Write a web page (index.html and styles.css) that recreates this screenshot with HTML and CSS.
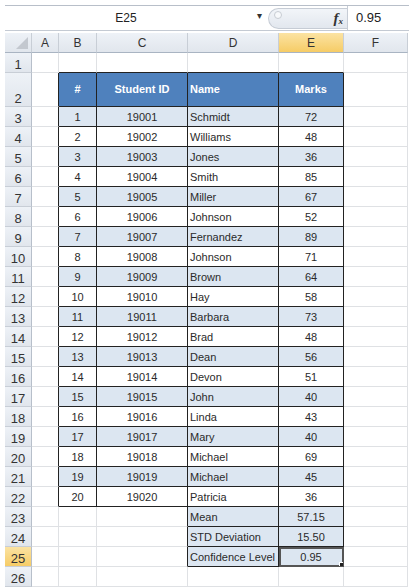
FILE: index.html
```html
<!DOCTYPE html>
<html lang="en">
<head>
  <meta charset="UTF-8">
  <title>Student Marks</title>
  <link rel="stylesheet" href="styles.css">
</head>
<body>
  <div class="window">
    <div class="formula-bar">
      <div class="name-box">E25<span class="drop">&#9662;</span></div>
      <div class="fx-pill"><span class="knob"></span><span class="fx">f<sub>x</sub></span></div>
      <div class="formula">0.95</div>
    </div>

    <table class="sheet">
      <colgroup>
        <col style="width:27px"><col style="width:27px"><col style="width:38px"><col style="width:91px">
        <col style="width:91px"><col style="width:65px"><col style="width:64px">
      </colgroup>
      <tr class="col-heads">
        <th class="corner"><span class="tri"></span></th>
        <th>A</th><th>B</th><th>C</th><th>D</th><th class="sel">E</th><th>F</th>
      </tr>
      <tr><th>1</th><td></td><td class="above"></td><td class="above"></td><td class="above"></td><td class="above"></td><td></td></tr>
      <tr class="tall">
        <th>2</th><td class="before"></td>
        <td class="d hd c">#</td><td class="d hd c">Student ID</td><td class="d hd">Name</td><td class="d hd c">Marks</td><td></td>
      </tr>
      <tr class="odd"><th>3</th><td class="before"></td><td class="d c">1</td><td class="d c">19001</td><td class="d">Schmidt</td><td class="d c">72</td><td></td></tr>
      <tr><th>4</th><td class="before"></td><td class="d c">2</td><td class="d c">19002</td><td class="d">Williams</td><td class="d c">48</td><td></td></tr>
      <tr class="odd"><th>5</th><td class="before"></td><td class="d c">3</td><td class="d c">19003</td><td class="d">Jones</td><td class="d c">36</td><td></td></tr>
      <tr><th>6</th><td class="before"></td><td class="d c">4</td><td class="d c">19004</td><td class="d">Smith</td><td class="d c">85</td><td></td></tr>
      <tr class="odd"><th>7</th><td class="before"></td><td class="d c">5</td><td class="d c">19005</td><td class="d">Miller</td><td class="d c">67</td><td></td></tr>
      <tr><th>8</th><td class="before"></td><td class="d c">6</td><td class="d c">19006</td><td class="d">Johnson</td><td class="d c">52</td><td></td></tr>
      <tr class="odd"><th>9</th><td class="before"></td><td class="d c">7</td><td class="d c">19007</td><td class="d">Fernandez</td><td class="d c">89</td><td></td></tr>
      <tr><th>10</th><td class="before"></td><td class="d c">8</td><td class="d c">19008</td><td class="d">Johnson</td><td class="d c">71</td><td></td></tr>
      <tr class="odd"><th>11</th><td class="before"></td><td class="d c">9</td><td class="d c">19009</td><td class="d">Brown</td><td class="d c">64</td><td></td></tr>
      <tr><th>12</th><td class="before"></td><td class="d c">10</td><td class="d c">19010</td><td class="d">Hay</td><td class="d c">58</td><td></td></tr>
      <tr class="odd"><th>13</th><td class="before"></td><td class="d c">11</td><td class="d c">19011</td><td class="d">Barbara</td><td class="d c">73</td><td></td></tr>
      <tr><th>14</th><td class="before"></td><td class="d c">12</td><td class="d c">19012</td><td class="d">Brad</td><td class="d c">48</td><td></td></tr>
      <tr class="odd"><th>15</th><td class="before"></td><td class="d c">13</td><td class="d c">19013</td><td class="d">Dean</td><td class="d c">56</td><td></td></tr>
      <tr><th>16</th><td class="before"></td><td class="d c">14</td><td class="d c">19014</td><td class="d">Devon</td><td class="d c">51</td><td></td></tr>
      <tr class="odd"><th>17</th><td class="before"></td><td class="d c">15</td><td class="d c">19015</td><td class="d">John</td><td class="d c">40</td><td></td></tr>
      <tr><th>18</th><td class="before"></td><td class="d c">16</td><td class="d c">19016</td><td class="d">Linda</td><td class="d c">43</td><td></td></tr>
      <tr class="odd"><th>19</th><td class="before"></td><td class="d c">17</td><td class="d c">19017</td><td class="d">Mary</td><td class="d c">40</td><td></td></tr>
      <tr><th>20</th><td class="before"></td><td class="d c">18</td><td class="d c">19018</td><td class="d">Michael</td><td class="d c">69</td><td></td></tr>
      <tr class="odd"><th>21</th><td class="before"></td><td class="d c">19</td><td class="d c">19019</td><td class="d">Michael</td><td class="d c">45</td><td></td></tr>
      <tr><th>22</th><td class="before"></td><td class="d c">20</td><td class="d c">19020</td><td class="d">Patricia</td><td class="d c">36</td><td></td></tr>
      <tr class="odd"><th>23</th><td></td><td></td><td class="before"></td><td class="d">Mean</td><td class="d c">57.15</td><td></td></tr>
      <tr class="odd"><th>24</th><td></td><td></td><td class="before"></td><td class="d">STD Deviation</td><td class="d c">15.50</td><td></td></tr>
      <tr class="odd"><th class="sel">25</th><td></td><td></td><td class="before"></td><td class="d">Confidence Level</td><td class="d c active">0.95</td><td></td></tr>
      <tr><th>26</th><td></td><td></td><td></td><td></td><td></td><td></td></tr>
    </table>
  </div>
</body>
</html>
```

FILE: styles.css
```css
body {
  margin: 0;
  background: #fff;
  font-family: "Liberation Sans", Arial, sans-serif;
}
.window {
  width: 404px;
  padding-left: 5px;
  border-right: 1px solid #c9ccd1;
  height: 588px;
  overflow: hidden;
}
.formula-bar {
  display: flex;
  margin-top: 5px;
  height: 24px;
  border-top: 1px solid #b8bfc9;
  border-bottom: 1px solid #c4cad3;
  margin-bottom: 2px;
  align-items: center;
}
.name-box {
  width: 260px;
  position: relative;
  text-align: center;
  font-size: 12px;
  color: #222;
  padding-right: 18px;
  box-sizing: border-box;
}
.drop {
  position: absolute;
  right: 3px;
  top: -1px;
  font-size: 10px;
  color: #333;
}
.fx-pill {
  width: 79px;
  height: 21px;
  margin-left: 3px;
  border: 1px solid #c6ccd5;
  border-right: none;
  border-radius: 11px 0 0 11px;
  background: linear-gradient(#f2f5f9, #e2e7ee);
  display: flex;
  align-items: center;
  justify-content: space-between;
  box-sizing: border-box;
  padding: 0 4px 0 5px;
}
.knob {
  width: 6px;
  height: 6px;
  border-radius: 50%;
  border: 1px solid #c7ccd3;
  background: #f7f9fb;
  margin-bottom: 6px;
}
.fx {
  font-family: "Liberation Serif", serif;
  font-style: italic;
  font-weight: bold;
  font-size: 15px;
  color: #333;
}
.fx sub {
  font-size: 9px;
  vertical-align: -1px;
}
.formula {
  flex: 1;
  height: 24px;
  line-height: 24px;
  border-left: 1px solid #c6ccd5;
  padding-left: 8px;
  font-size: 13px;
  color: #222;
}
.sheet {
  border-collapse: separate;
  border-spacing: 0;
  table-layout: fixed;
  width: 403px;
}
.sheet tr {
  height: 20px;
}
.sheet tr.tall {
  height: 34px;
}
.sheet th {
  background: linear-gradient(#eef2f7, #e1e6ed);
  color: #333;
  font-weight: normal;
  font-size: 13px;
  border-right: 1px solid #b7bfca;
  border-bottom: 1px solid #c8ced6;
  padding: 0;
  vertical-align: bottom;
  text-align: center;
}
.col-heads th {
  font-size: 12px;
  vertical-align: middle;
  border-bottom: 1px solid #a9b4c2;
  border-right: 1px solid #c8ced6;
}
.sheet th.sel {
  background: linear-gradient(#fbe3a3, #f6cc66);
  color: #333;
}
.corner {
  position: relative;
}
.tri {
  position: absolute;
  right: 3px;
  bottom: 3px;
  width: 0;
  height: 0;
  border-left: 12px solid transparent;
  border-bottom: 12px solid #c3c8cf;
}
.sheet td {
  border-right: 1px solid #dfe1e4;
  border-bottom: 1px solid #dfe1e4;
  padding: 0 2px;
  font-size: 11px;
  color: #2a2a2a;
  white-space: nowrap;
  overflow: hidden;
  vertical-align: bottom;
  line-height: 17px;
}
.sheet td.above {
  border-bottom-color: #222;
}
.sheet td.before {
  border-right-color: #222;
}
.sheet td.d {
  border-right: 1px solid #222;
  border-bottom: 1px solid #222;
}
.odd td.d {
  background: #dce6f1;
}
.sheet td.hd {
  background: #4f81bd;
  color: #fff;
  font-weight: bold;
  vertical-align: middle;
}
.sheet td.c {
  text-align: center;
}
.sheet td.active {
  position: relative;
  outline: 2px solid #555;
  outline-offset: -2px;
}
.sheet td.active::after {
  content: "";
  position: absolute;
  right: -3px;
  bottom: -3px;
  width: 5px;
  height: 5px;
  background: #222;
  border: 1px solid #fff;
}
```
